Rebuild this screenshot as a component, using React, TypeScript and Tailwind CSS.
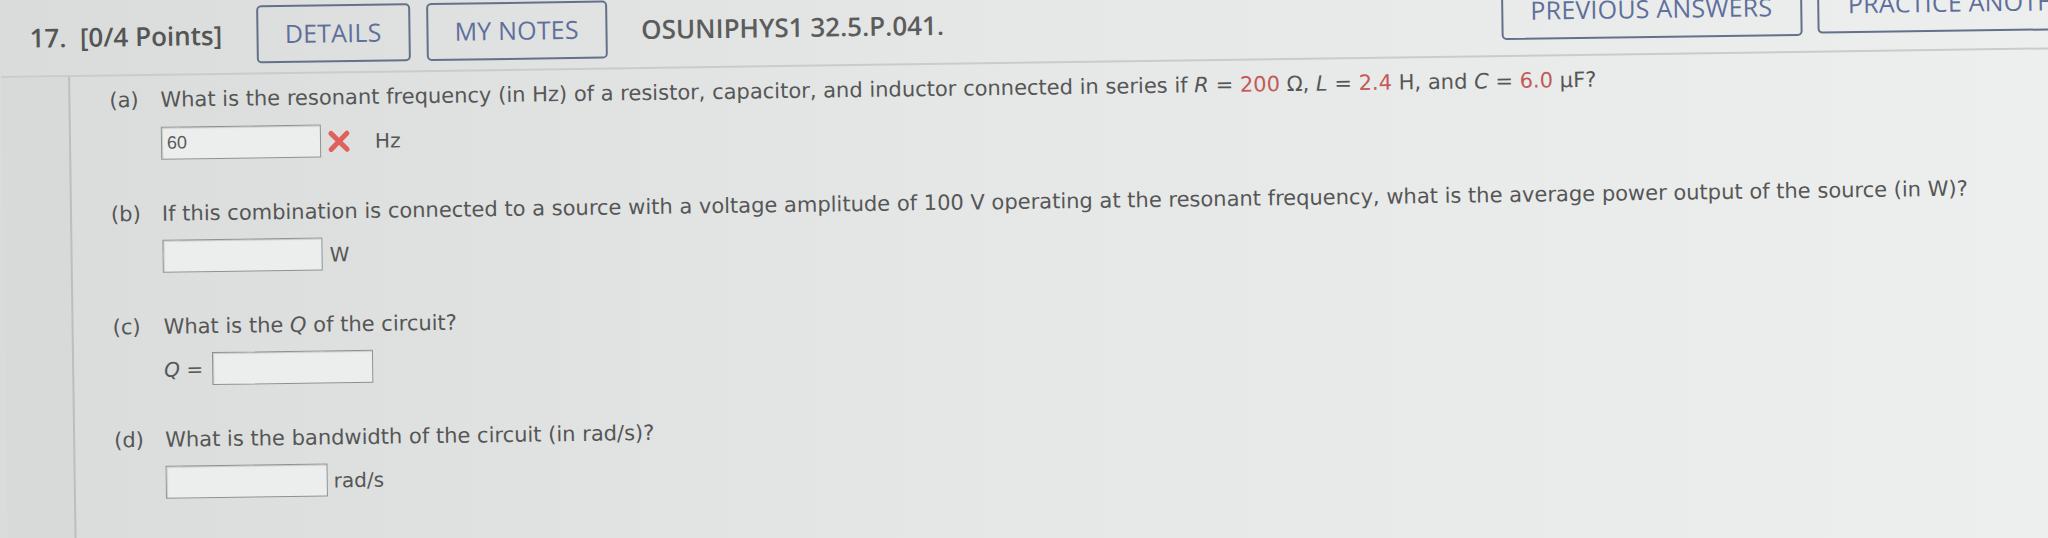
import React from "react";

const hdr = { fontFamily: '"Open Sans", "Liberation Sans", sans-serif' };
const body = { fontFamily: '"DejaVu Sans", Verdana, sans-serif' };

function Btn({ label, w }: { label: string; w: string }) {
  return (
    <div
      className={`flex h-[58px] shrink-0 items-center justify-center whitespace-nowrap rounded-[5px] border-2 border-[#65718b] text-[25px] tracking-[0.2px] text-[#5f6f9c] ${w}`}
      style={hdr}
    >
      {label}
    </div>
  );
}

function Box({ w = "w-[160px]", children }: { w?: string; children?: React.ReactNode }) {
  return (
    <div
      className={`flex h-[33px] items-center border border-[#8e9190] bg-[#eceeed] px-[5px] text-[18px] text-[#5b5b5b] shadow-[inset_1px_1px_1px_rgba(0,0,0,0.15)] ${w}`}
      style={{ fontFamily: '"Liberation Sans", Arial, sans-serif' }}
    >
      {children}
    </div>
  );
}

function Part({ tag, children }: { tag: string; children: React.ReactNode }) {
  return (
    <div className="flex h-[24px] items-center text-[21px] leading-[24px] text-[#565656]">
      <span className="w-[51px] shrink-0">({tag})</span>
      <span className="whitespace-nowrap">{children}</span>
    </div>
  );
}

const red = "text-[#c45a58]";

export default function App() {
  return (
    <div className="h-[538px] w-[2048px] overflow-hidden bg-gradient-to-r from-[#d9dcdb] via-[#e5e8e7] to-[#edefee]">
      <div className="w-[2400px] origin-top-left rotate-[-0.8deg]">
        {/* header */}
        <div className="flex h-[78px] items-center border-b-2 border-[#c9cccb] pl-[29px]">
          <div className="shrink-0 whitespace-nowrap text-[26px] font-semibold text-[#555]" style={hdr}>
            17.&nbsp; [0/4 Points]
          </div>
          <div className="ml-[34px] shrink-0">
            <Btn label="DETAILS" w="w-[154px]" />
          </div>
          <div className="ml-[16px] shrink-0">
            <Btn label="MY NOTES" w="w-[181px]" />
          </div>
          <div className="ml-[34px] shrink-0 whitespace-nowrap text-[26px] font-semibold text-[#5c5c5c]" style={hdr}>
            OSUNIPHYS1 32.5.P.041.
          </div>
          <div className="ml-[557px] -mt-[12px] shrink-0">
            <Btn label="PREVIOUS ANSWERS" w="w-[301px]" />
          </div>
          <div className="ml-[15px] -mt-[16px] shrink-0">
            <Btn label="PRACTICE ANOTHER" w="w-[300px]" />
          </div>
        </div>

        {/* body */}
        <div className="flex h-[520px]">
          <div className="w-[69px] shrink-0 border-r-2 border-[#bcbfbe] bg-[#d7dad9]" />
          <div className="flex flex-col gap-[42px] pl-[39px] pt-[12px]" style={body}>
            <div className="flex flex-col gap-[15px]">
              <Part tag="a">
                What is the resonant frequency (in Hz) of a resistor, capacitor, and inductor connected in series if{" "}
                <i>R</i> = <span className={red}>200</span> Ω, <i>L</i> = <span className={red}>2.4</span> H, and{" "}
                <i>C</i> = <span className={red}>6.0</span> μF?
              </Part>
              <div className="flex items-center pl-[51px]">
                <Box>60</Box>
                <svg width="24" height="24" viewBox="0 0 24 24" className="ml-[6px]">
                  <path d="M4 4 L20 20 M20 4 L4 20" stroke="#e0605e" strokeWidth="5" strokeLinecap="round" />
                </svg>
                <span className="ml-[24px] text-[20px] text-[#565656]">Hz</span>
              </div>
            </div>

            <div className="flex flex-col gap-[14px]">
              <Part tag="b">
                If this combination is connected to a source with a voltage amplitude of 100 V operating at the resonant
                frequency, what is the average power output of the source (in W)?
              </Part>
              <div className="flex items-center pl-[51px]">
                <Box />
                <span className="ml-[7px] text-[20px] text-[#565656]">W</span>
              </div>
            </div>

            <div className="flex flex-col gap-[14px]">
              <Part tag="c">
                What is the <i>Q</i> of the circuit?
              </Part>
              <div className="flex items-center pl-[51px]">
                <span className="w-[48px] text-[20px] text-[#565656]">
                  <i>Q</i> =
                </span>
                <Box w="w-[161px]" />
              </div>
            </div>

            <div className="flex flex-col gap-[14px]">
              <Part tag="d">What is the bandwidth of the circuit (in rad/s)?</Part>
              <div className="flex items-center pl-[51px]">
                <Box w="w-[162px]" />
                <span className="ml-[6px] text-[20px] text-[#565656]">rad/s</span>
              </div>
            </div>
          </div>
        </div>
      </div>
    </div>
  );
}
